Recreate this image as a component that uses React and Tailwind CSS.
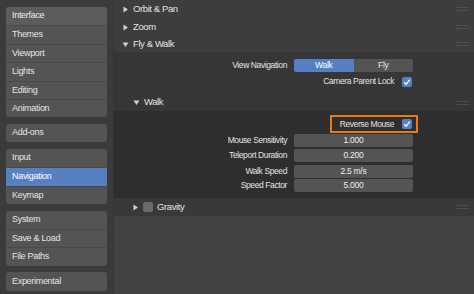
import React from 'react'

const font = { fontFamily: '"Liberation Sans", Arial, sans-serif' }

function Arrow({ open }) {
  return (
    <svg width="7" height="7" viewBox="0 0 7 7" className="shrink-0">
      {open ? <polygon points="0.5,1.5 6.5,1.5 3.5,6" fill="#cfcfcf" /> : <polygon points="1.5,0.5 6,3.5 1.5,6.5" fill="#cfcfcf" />}
    </svg>
  )
}

function Grip() {
  return (
    <svg width="14" height="6" viewBox="0 0 14 6" className="absolute right-[4px] top-1/2 -translate-y-1/2">
      {[0, 1, 2, 3, 4, 5, 6].map((i) => (
        <g key={i}>
          <rect x={i * 2} y="1" width="1" height="1" fill="#5e5e5e" />
          <rect x={i * 2} y="4" width="1" height="1" fill="#5e5e5e" />
        </g>
      ))}
    </svg>
  )
}

function Check({ on = true }) {
  return on ? (
    <div className="w-[10px] h-[10px] shrink-0 rounded-[2px] bg-[#5680c2] flex items-center justify-center">
      <svg width="8" height="8" viewBox="0 0 8 8">
        <polyline points="1.2,4.2 3.2,6.2 6.8,1.6" fill="none" stroke="#fff" strokeWidth="1.3" />
      </svg>
    </div>
  ) : (
    <div className="w-[10px] h-[10px] shrink-0 rounded-[2px] bg-[#6a6a6a]" />
  )
}

function Group({ items, active, hover }) {
  return (
    <div className="rounded-[3px] overflow-hidden bg-[#545454]">
      {items.map((t, i) => (
        <div
          key={t}
          className={`h-[18.4px] flex items-center pl-[6px] text-[9px] tracking-[-0.3px] ${i > 0 ? 'border-t border-[#494949]' : ''} ${
            t === active ? 'bg-[#5680c2] text-white' : t === hover ? 'bg-[#5c5c5c] text-[#ececec]' : 'text-[#e4e4e4]'
          }`}
        >
          {t}
        </div>
      ))}
    </div>
  )
}

function Header({ title, open, h = 'h-[18px]', bg = 'bg-[#3d3d3d]', indent = 'pl-[8px]', children }) {
  return (
    <div className={`relative ${h} ${bg} flex items-center gap-[4px] ${indent} text-[9.5px] tracking-[-0.4px] text-[#e4e4e4]`}>
      <Arrow open={open} />
      {children}
      <span>{title}</span>
      <Grip />
    </div>
  )
}

function Field({ label, value, top = '' }) {
  return (
    <div className={`flex items-center ${top}`}>
      <div className="w-[180px] text-right pr-[7px] text-[8.5px] tracking-[-0.4px] text-[#e4e4e4]">{label}</div>
      <div className="w-[119px] h-[13px] bg-[#545454] rounded-[2px] flex items-center justify-center text-[8.5px] tracking-[-0.3px] text-[#ececec]">{value}</div>
    </div>
  )
}

export default function App() {
  return (
    <div className="w-[474px] h-[294px] flex bg-[#424242] overflow-hidden" style={font}>
      <div className="w-[114px] shrink-0 bg-[#3b3b3b] pl-[6px] pr-[6px] pt-[7px] flex flex-col gap-[6.6px] border-r border-[#333333]">
        <Group items={['Interface', 'Themes', 'Viewport', 'Lights', 'Editing', 'Animation']} hover="Interface" />
        <Group items={['Add-ons']} />
        <Group items={['Input', 'Navigation', 'Keymap']} active="Navigation" />
        <Group items={['System', 'Save & Load', 'File Paths']} />
        <Group items={['Experimental']} />
      </div>

      <div className="flex-1 flex flex-col">
        <Header title="Orbit & Pan" />
        <Header title="Zoom" />
        <Header title="Fly & Walk" open h="h-[16px]" />
        <div className="bg-[#363636] pt-[7px]">
          <div className="flex items-center">
            <div className="w-[180px] text-right pr-[7px] text-[8.5px] tracking-[-0.4px] text-[#e4e4e4]">View Navigation</div>
            <div className="flex w-[119px] h-[13px] rounded-[2px] overflow-hidden text-[8.5px] tracking-[-0.3px]">
              <div className="flex-1 bg-[#5680c2] text-white flex items-center justify-center">Walk</div>
              <div className="flex-1 bg-[#545454] text-[#e4e4e4] flex items-center justify-center">Fly</div>
            </div>
          </div>
          <div className="flex items-center justify-end w-[298px] gap-[8px] mt-[4px] h-[11px]">
            <span className="text-[8.5px] tracking-[-0.4px] text-[#e4e4e4] whitespace-nowrap">Camera Parent Lock</span>
            <Check />
          </div>
          <div className="h-[7px]" />
          <Header title="Walk" open h="h-[17px]" bg="bg-[#363636]" indent="pl-[19px]" />
          <div className="bg-[#2e2e2e] pt-[4px] pb-[6px]">
            <div className="flex justify-end w-[304px]">
              <div className="flex items-center justify-end gap-[8px] h-[18px] w-[88px] border-2 border-[#ea7a16] pr-[4px] text-[8.5px] tracking-[-0.4px] text-[#e4e4e4] whitespace-nowrap">
                <span>Reverse Mouse</span>
                <Check />
              </div>
            </div>
            <Field label="Mouse Sensitivity" value="1.000" top="mt-[1px]" />
            <Field label="Teleport Duration" value="0.200" top="mt-[2px]" />
            <Field label="Walk Speed" value="2.5 m/s" top="mt-[3px]" />
            <Field label="Speed Factor" value="5.000" top="mt-[1px]" />
          </div>
          <Header title="Gravity" h="h-[18px]" bg="bg-[#393939]" indent="pl-[18px]">
            <Check on={false} />
          </Header>
        </div>
      </div>
    </div>
  )
}
